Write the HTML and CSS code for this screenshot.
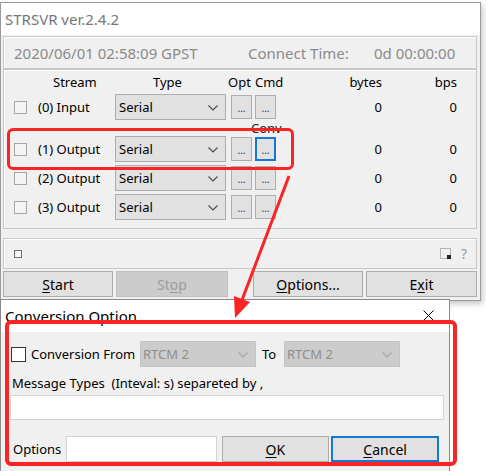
FILE: index.html
```html
<!DOCTYPE html>
<html>
<head>
<meta charset="utf-8">
<title>STRSVR</title>
<link rel="stylesheet" href="styles.css">
</head>
<body>
<div class="desk">

  <div class="win main-win">
    <div class="titlebar"><span class="title inactive">STRSVR ver.2.4.2</span></div>
    <div class="client">
      <div class="panel status">
        <span class="st-time">2020/06/01 02:58:09 GPST</span>
        <span class="st-label">Connect Time:</span>
        <span class="st-val">0d 00:00:00</span>
      </div>

      <div class="panel streams">
        <div class="srow head">
          <span></span>
          <span class="h-stream">Stream</span>
          <span class="h-type">Type</span>
          <span class="h-opt">Opt</span>
          <span class="h-cmd">Cmd</span>
          <span class="num">bytes</span>
          <span class="num">bps</span>
        </div>

        <div class="srow">
          <span class="cb"></span>
          <span class="lbl">(0) Input</span>
          <span class="sel">Serial<svg class="chev" viewBox="0 0 10 6"><polyline points="0.5,0.5 5,5 9.5,0.5"/></svg></span>
          <span class="dots opt">...</span>
          <span class="dots cmd">...</span>
          <span class="num">0</span>
          <span class="num">0</span>
        </div>

        <div class="srow conv-row">
          <span class="conv">Conv</span>
        </div>

        <div class="srow">
          <span class="cb"></span>
          <span class="lbl">(1) Output</span>
          <span class="sel">Serial<svg class="chev" viewBox="0 0 10 6"><polyline points="0.5,0.5 5,5 9.5,0.5"/></svg></span>
          <span class="dots opt">...</span>
          <span class="dots cmd focus">...</span>
          <span class="num">0</span>
          <span class="num">0</span>
        </div>

        <div class="srow gap">
          <span class="cb"></span>
          <span class="lbl">(2) Output</span>
          <span class="sel">Serial<svg class="chev" viewBox="0 0 10 6"><polyline points="0.5,0.5 5,5 9.5,0.5"/></svg></span>
          <span class="dots opt">...</span>
          <span class="dots cmd">...</span>
          <span class="num">0</span>
          <span class="num">0</span>
        </div>

        <div class="srow gap">
          <span class="cb"></span>
          <span class="lbl">(3) Output</span>
          <span class="sel">Serial<svg class="chev" viewBox="0 0 10 6"><polyline points="0.5,0.5 5,5 9.5,0.5"/></svg></span>
          <span class="dots opt">...</span>
          <span class="dots cmd">...</span>
          <span class="num">0</span>
          <span class="num">0</span>
        </div>
      </div>

      <div class="panel bottom">
        <span class="mini-box"></span>
        <span class="spacer"></span>
        <svg class="sel-icon" viewBox="0 0 12 12">
          <rect x="0.5" y="0.5" width="10" height="10" fill="none" stroke="#777" stroke-dasharray="1 1"/>
          <rect x="7" y="7" width="4" height="4" fill="#222"/>
        </svg>
        <span class="help">?</span>
      </div>

      <div class="buttons">
        <span class="btn w-start"><u>S</u>tart</span>
        <span class="btn disabled w-stop">St<u>o</u>p</span>
        <span class="btn-spacer"></span>
        <span class="btn w-opts"><u>O</u>ptions...</span>
        <span class="btn w-exit">E<u>x</u>it</span>
      </div>
    </div>
  </div>

  <div class="win dialog">
    <div class="titlebar dlg-title">
      <span class="title">Conversion Option</span>
      <svg class="close" viewBox="0 0 11 11"><path d="M0.5 0.5 L10.5 10.5 M10.5 0.5 L0.5 10.5"/></svg>
    </div>
    <div class="client dlg-client">
      <div class="d-row">
        <span class="d-cb"></span>
        <span class="d-from">Conversion From</span>
        <span class="sel off">RTCM 2<svg class="chev" viewBox="0 0 10 6"><polyline points="0.5,0.5 5,5 9.5,0.5"/></svg></span>
        <span class="d-to">To</span>
        <span class="sel off">RTCM 2<svg class="chev" viewBox="0 0 10 6"><polyline points="0.5,0.5 5,5 9.5,0.5"/></svg></span>
      </div>
      <div class="d-msg">Message Types&nbsp; (Inteval: s) separeted by ,</div>
      <div class="d-input wide"></div>
      <div class="d-row d-last">
        <span class="d-optlbl">Options</span>
        <span class="d-input opts"></span>
        <span class="btn d-ok"><u>O</u>K</span>
        <span class="btn d-cancel"><u>C</u>ancel</span>
      </div>
    </div>
  </div>

  <div class="mark mark-1"></div>
  <div class="mark mark-2"></div>
  <svg class="arrow" viewBox="0 0 486 471">
    <line x1="289" y1="176" x2="242" y2="300"/>
    <polygon points="235,318 250,302 234,296"/>
  </svg>
</div>
</body>
</html>
```

FILE: styles.css
```css
* { box-sizing: border-box; }

html, body {
  margin: 0;
  padding: 0;
  background: #ffffff;
}

body {
  font-family: "Noto Sans", "Open Sans", sans-serif;
  font-size: 13px;
  color: #000;
}

.desk {
  position: relative;
  width: 486px;
  height: 471px;
  overflow: hidden;
}

.win {
  position: absolute;
  border: 1px solid #9a9a9a;
  background: #f0f0f0;
  display: flex;
  flex-direction: column;
}

.main-win {
  left: 0;
  top: 2px;
  width: 481px;
  height: 299px;
  box-shadow: 2px 3px 6px rgba(0, 0, 0, 0.22);
}

.titlebar {
  height: 32px;
  background: #ffffff;
  display: flex;
  align-items: center;
  padding-left: 4px;
  flex: none;
}

.title {
  font-size: 15px;
  line-height: 20px;
}

.title.inactive { color: #777777; }

.client {
  flex: 1;
  display: flex;
  flex-direction: column;
  padding: 1px 3px 3px 2px;
}

.panel {
  border: 1px solid #c8c8c8;
  box-shadow: inset 1px 1px 0 #ffffff;
}

/* status */
.status {
  height: 33px;
  display: flex;
  align-items: center;
  padding-left: 10px;
  color: #8a8a8a;
  font-size: 15px;
}

.st-time { width: 234px; }
.st-label { width: 126px; }

/* streams */
.streams {
  height: 160px;
  padding-bottom: 8px;
}

.srow {
  display: grid;
  grid-template-columns: 24px 77px 114px 24px 26px 103px 75px;
  align-items: center;
  height: 26px;
  padding-left: 10px;
}

.srow.head { height: 24px; }
.srow.gap { margin-top: 3px; }
.srow.conv-row { height: 16px; }

.h-stream { padding-left: 15px; }
.h-type { padding-left: 38px; }
.h-opt { margin-left: -1px; }
.h-cmd { padding-left: 2px; }

.num { text-align: right; }

.cb {
  width: 13px;
  height: 13px;
  border: 1px solid #a6a6a6;
  background: #f4f4f4;
}

.lbl { white-space: nowrap; }

.sel {
  position: relative;
  width: 111px;
  height: 26px;
  border: 1px solid #adadad;
  background: #e1e1e1;
  display: flex;
  align-items: center;
  padding-left: 3px;
}

.chev {
  position: absolute;
  right: 7px;
  top: 10px;
  width: 10px;
  height: 6px;
  fill: none;
  stroke: #4a4a4a;
  stroke-width: 1.1;
}

.dots {
  width: 21px;
  height: 24px;
  margin-left: 2px;
  border: 1px solid #adadad;
  background: #e1e1e1;
  font-size: 10px;
  line-height: 24px;
  text-align: center;
  color: #1e1e50;
}

.dots.focus {
  border: 2px solid #1479d4;
  line-height: 22px;
}

.conv {
  grid-column: 5;
  justify-self: start;
  margin-left: -2px;
  line-height: 16px;
  color: #222;
}

/* bottom panel */
.bottom {
  margin-top: 9px;
  height: 31px;
  display: flex;
  align-items: center;
  padding: 0 9px 0 9px;
}

.mini-box {
  width: 8px;
  height: 8px;
  border: 1px solid #707070;
  background: #fafafa;
  margin-left: 1px;
}

.spacer { flex: 1; }

.sel-icon {
  width: 12px;
  height: 12px;
  margin-right: 9px;
}

.help {
  color: #9a9a9a;
  font-size: 14px;
  margin-right: 0;
}

/* buttons */
.buttons {
  margin-top: 2px;
  display: flex;
  height: 26px;
}

.btn {
  height: 26px;
  border: 1px solid #adadad;
  background: #e1e1e1;
  display: flex;
  align-items: center;
  justify-content: center;
  font-size: 14px;
}

.btn u { text-underline-offset: 2px; }

.btn.disabled {
  background: #cccccc;
  border-color: #bfbfbf;
  color: #9c9c9c;
}

.w-start { width: 110px; }
.w-stop { width: 112px; margin-left: 3px; }
.btn-spacer { width: 25px; }
.w-opts { width: 110px; }
.w-exit { width: 111px; margin-left: 3px; }

/* dialog */
.dialog {
  left: 0;
  top: 299px;
  width: 450px;
  height: 190px;
  border-color: #8a8a8a;
}

.dlg-title {
  position: relative;
  padding-left: 4px;
}

.dlg-title .title { color: #000; }

.close {
  position: absolute;
  left: 422px;
  top: 10px;
  width: 11px;
  height: 11px;
  fill: none;
  stroke: #000;
  stroke-width: 1;
}

.dlg-client {
  padding: 9px 10px 0 10px;
}

.d-row {
  display: flex;
  align-items: center;
  height: 26px;
}

.d-cb {
  width: 15px;
  height: 15px;
  border: 1px solid #333;
  background: #fff;
}

.d-from {
  width: 114px;
  padding-left: 5px;
}

.sel.off {
  width: 116px;
  background: #cccccc;
  border-color: #c3c3c3;
  color: #8e8e8e;
  padding-left: 2px;
}

.sel.off .chev { stroke: #a6a6a6; }

.d-to {
  width: 28px;
  padding-left: 6px;
}

.d-msg {
  margin-top: 8px;
  margin-left: 1px;
  line-height: 16px;
  height: 16px;
  white-space: nowrap;
}

.d-input {
  background: #ffffff;
  border: 1px solid #d4d4d4;
}

.d-input.wide {
  margin-top: 4px;
  margin-left: -1px;
  width: 434px;
  height: 25px;
}

.d-last { margin-top: 16px; }

.d-optlbl {
  width: 55px;
  padding-left: 2px;
}

.d-input.opts {
  width: 151px;
  height: 26px;
}

.d-ok {
  width: 108px;
  margin-left: 5px;
}

.d-cancel {
  width: 108px;
  margin-left: 2px;
  border: 2px solid #1479d4;
}

/* red annotations */
.mark {
  position: absolute;
  border-style: solid;
  border-color: #fa2424;
  border-radius: 6px;
}

.mark-1 {
  left: 7px;
  top: 128px;
  width: 287px;
  height: 42px;
  border-width: 3px;
}

.mark-2 {
  left: 5px;
  top: 320px;
  width: 452px;
  height: 146px;
  border-width: 4px;
}

.arrow {
  position: absolute;
  left: 0;
  top: 0;
  width: 486px;
  height: 471px;
  pointer-events: none;
}

.arrow line {
  stroke: #fa2424;
  stroke-width: 3;
}

.arrow polygon { fill: #fa2424; }
```
